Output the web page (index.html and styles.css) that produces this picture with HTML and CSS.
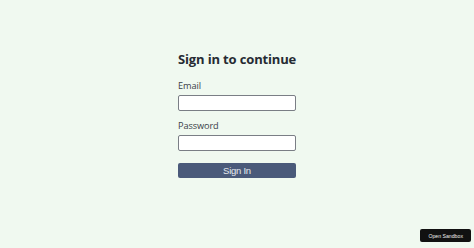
FILE: index.html
```html
<!DOCTYPE html>
<html lang="en">
<head>
<meta charset="utf-8">
<link rel="stylesheet" href="styles.css">
</head>
<body>
<main class="page">
  <form class="card">
    <h1 class="title">Sign in to continue</h1>
    <label class="label" for="email">Email</label>
    <input class="field" id="email" type="email">
    <label class="label" for="password">Password</label>
    <input class="field" id="password" type="password">
    <button class="submit" type="button">Sign In</button>
  </form>
</main>
<a class="sandbox">Open Sandbox</a>
</body>
</html>
```
FILE: styles.css
```css
html, body {
  margin: 0;
  height: 100%;
}
body {
  background: #f0f9f0;
  font-family: "Open Sans", sans-serif;
  color: #2a2f38;
}
.page {
  box-sizing: border-box;
  height: 100%;
  padding-bottom: 21px;
  display: flex;
  justify-content: center;
  align-items: center;
}
.card {
  width: 118px;
  display: flex;
  flex-direction: column;
}
.title {
  font-size: 13px;
  letter-spacing: -0.15px;
  font-weight: 700;
  margin: 0 0 10px;
  white-space: nowrap;
  line-height: 20px;
  color: #262b33;
}
.label {
  font-size: 9.2px;
  letter-spacing: -0.1px;
  line-height: 14px;
  color: #3a3f48;
  margin-bottom: 2px;
}
.field {
  box-sizing: border-box;
  height: 16px;
  width: 100%;
  margin: 0 0 8px;
  border: 1px solid #7a7e85;
  border-radius: 2px;
  background: #fff;
  padding: 0 3px;
}
.field:last-of-type {
  margin-bottom: 12px;
}
.submit {
  height: 15px;
  border: none;
  border-radius: 2px;
  background: #4a5a7a;
  color: #e6eaf0;
  font-family: "Liberation Sans", Arial, sans-serif;
  font-size: 9.5px;
  letter-spacing: -0.25px;
  padding: 0;
}
.sandbox {
  position: fixed;
  right: 3px;
  bottom: 6px;
  height: 13px;
  display: flex;
  align-items: center;
  background: #111;
  color: #eee;
  font-family: "Liberation Sans", Arial, sans-serif;
  font-size: 5.2px;
  padding: 0 8px;
  border-radius: 2px;
}
```
